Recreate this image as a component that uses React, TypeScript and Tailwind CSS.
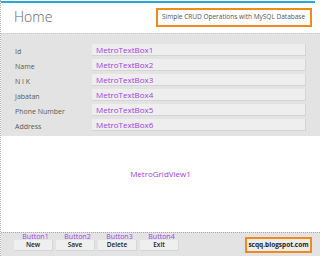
import React from "react";

const rows = [
  ["Id", "MetroTextBox1"],
  ["Name", "MetroTextBox2"],
  ["N I K", "MetroTextBox3"],
  ["Jabatan", "MetroTextBox4"],
  ["Phone Number", "MetroTextBox5"],
  ["Address", "MetroTextBox6"],
];

const buttons = [
  ["Button1", "New"],
  ["Button2", "Save"],
  ["Button3", "Delete"],
  ["Button4", "Exit"],
];

export default function App() {
  return (
    <div
      className="w-[320px] h-[256px] bg-white flex flex-col border-l border-dotted border-[#b0b0b0] overflow-hidden"
      style={{ fontFamily: '"Open Sans", "Liberation Sans", sans-serif' }}
    >
      <div className="h-[1px]" />
      <div className="h-[2px] w-[314px] bg-[#29a8dd]" />
      <div className="h-[30px] flex items-center justify-between pl-[13px] pr-[8px]">
        <span className="text-[14px] font-light text-[#666] leading-none mt-[-3px]">Home</span>
        <div className="w-[156px] h-[19px] border-2 border-[#f08a1c] flex items-center pl-[4px] mt-[-2px]">
          <span className="text-[6.5px] text-[#555] whitespace-nowrap leading-none">
            Simple CRUD Operations with MySQL Database
          </span>
        </div>
      </div>
      <div className="h-[103px] bg-[#e3e3e3] border-t border-dotted border-[#c8c8c8] pt-[10px] pl-[14px] flex flex-col gap-[3px]">
        {rows.map(([l, t]) => (
          <div key={l} className="flex items-center h-[12px]">
            <span className="w-[77px] text-[7px] text-[#5a5a5a] leading-none mt-[3px]">{l}</span>
            <div className="w-[214px] h-[12px] bg-[#eeeeee] border-b border-r border-[#d4d4d4] flex items-center pl-[4px]">
              <span className="text-[8px] text-[#a040e8] leading-none">{t}</span>
            </div>
          </div>
        ))}
      </div>
      <div className="h-[96px] bg-white flex items-center justify-center">
        <span className="text-[8px] text-[#a040e8] leading-none mt-[-20px]">MetroGridView1</span>
      </div>
      <div className="flex-1 bg-[#e3e3e3] border-t border-dotted border-[#a8a8a8] flex items-start pl-[13px] pr-[8px]">
        <div className="flex gap-[3px]">
          {buttons.map(([lbl, txt]) => (
            <div key={lbl} className="flex flex-col items-center">
              <span className="text-[7px] text-[#a040e8] leading-[6px] h-[6px] ml-[4px] pt-[1px]">{lbl}</span>
              <div className="w-[39px] h-[11px] mt-[1px] bg-[#efefef] border-b border-r border-[#d6d6d6] flex items-center justify-center">
                <span className="text-[6.5px] font-semibold text-[#222] leading-none">{txt}</span>
              </div>
            </div>
          ))}
        </div>
        <div className="ml-auto mt-[4px] w-[67px] h-[16px] border-2 border-[#f08a1c] bg-[#ececec] flex items-center justify-center">
          <span className="text-[6.5px] font-bold text-[#222] leading-none">scqq.blogspot.com</span>
        </div>
      </div>
    </div>
  );
}
